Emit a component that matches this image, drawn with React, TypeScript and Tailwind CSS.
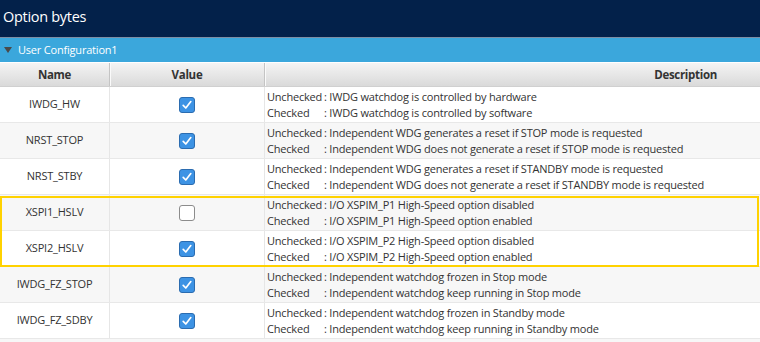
import React from "react";

type Row = {
  name: string;
  checked: boolean;
  off: string;
  on: string;
};

const rows: Row[] = [
  {
    name: "IWDG_HW",
    checked: true,
    off: "IWDG watchdog is controlled by hardware",
    on: "IWDG watchdog is controlled by software",
  },
  {
    name: "NRST_STOP",
    checked: true,
    off: "Independent WDG generates a reset if STOP mode is requested",
    on: "Independent WDG does not generate a reset if STOP mode is requested",
  },
  {
    name: "NRST_STBY",
    checked: true,
    off: "Independent WDG generates a reset if STANDBY mode is requested",
    on: "Independent WDG does not generate a reset if STANDBY mode is requested",
  },
  {
    name: "XSPI1_HSLV",
    checked: false,
    off: "I/O XSPIM_P1 High-Speed option disabled",
    on: "I/O XSPIM_P1 High-Speed option enabled",
  },
  {
    name: "XSPI2_HSLV",
    checked: true,
    off: "I/O XSPIM_P2 High-Speed option disabled",
    on: "I/O XSPIM_P2 High-Speed option enabled",
  },
  {
    name: "IWDG_FZ_STOP",
    checked: true,
    off: "Independent watchdog frozen in Stop mode",
    on: "Independent watchdog keep running in Stop mode",
  },
  {
    name: "IWDG_FZ_SDBY",
    checked: true,
    off: "Independent watchdog frozen in Standby mode",
    on: "Independent watchdog keep running in Standby mode",
  },
];

function Checkbox({ checked }: { checked: boolean }) {
  if (!checked) {
    return <div className="w-[16px] h-[16px] rounded-[3px] border border-[#8c8c8c] bg-white" />;
  }
  return (
    <div className="w-[16px] h-[16px] rounded-[3px] border border-[#2b6cb0] bg-[#3d93e4] flex items-center justify-center">
      <svg width="12" height="12" viewBox="0 0 12 12">
        <path d="M2.2 6.4 L4.8 9 L9.8 2.6" fill="none" stroke="#fff" strokeWidth="1.7" strokeLinecap="round" strokeLinejoin="round" />
      </svg>
    </div>
  );
}

function TableRow({ row, index }: { row: Row; index: number }) {
  const bg = index % 2 === 1 ? "bg-[#f7f7f7]" : "bg-white";
  return (
    <div className={`flex h-[36px] border-b border-[#e8e8e8] ${bg}`}>
      <div className="w-[110px] shrink-0 flex items-center justify-center border-r border-[#e6e6e6] text-[#333]">
        {row.name}
      </div>
      <div className="w-[155px] shrink-0 flex items-center justify-center border-r border-[#e6e6e6]">
        <Checkbox checked={row.checked} />
      </div>
      <div className="flex-1 flex flex-col justify-center pl-[2px] leading-[16px] text-[#333] whitespace-nowrap">
        <div className="flex">
          <span className="w-[57px]">Unchecked</span>
          <span>:&nbsp;{row.off}</span>
        </div>
        <div className="flex">
          <span className="w-[57px]">Checked</span>
          <span>:&nbsp;{row.on}</span>
        </div>
      </div>
    </div>
  );
}

export default function App() {
  return (
    <div
      className="w-[760px] h-[342px] overflow-hidden bg-white text-[11px] tracking-[-0.2px]"
      style={{ fontFamily: '"Open Sans", "Noto Sans", sans-serif' }}
    >
      {/* title */}
      <div className="h-[38px] bg-[#03214a] border-b border-[#7d8ea5] flex items-center pl-[3px] pb-[3px] text-white text-[14.5px] tracking-[-0.3px]">
        Option bytes
      </div>
      {/* group bar */}
      <div className="h-[25px] bg-[#3ba7dc] flex items-center text-white text-[11px] border-b border-white">
        <span className="ml-[4px] mr-[6px] w-0 h-0 border-l-[4px] border-r-[4px] border-t-[6px] border-l-transparent border-r-transparent border-t-[#4a4a4a]" />
        User Configuration1
      </div>
      {/* header */}
      <div className="h-[24px] flex bg-gradient-to-b from-[#f4f4f4] to-[#dadada] border-b border-[#d0d0d0] font-bold text-[#333] text-[11.5px] tracking-[-0.3px]">
        <div className="w-[110px] shrink-0 flex items-center justify-center border-r border-[#c4c4c4] shadow-[1px_0_0_#fafafa]">Name</div>
        <div className="w-[155px] shrink-0 flex items-center justify-center border-r border-[#c4c4c4] shadow-[1px_0_0_#fafafa]">Value</div>
        <div className="flex-1 flex items-center justify-end pr-[43px]">Description</div>
      </div>
      {rows.slice(0, 3).map((r, i) => (
        <TableRow key={r.name} row={r} index={i} />
      ))}
      <div className="relative">
        {rows.slice(3, 5).map((r, i) => (
          <TableRow key={r.name} row={r} index={i + 3} />
        ))}
        <div className="absolute left-0 right-[1px] top-[1px] bottom-0 border-2 border-[#ffd200] pointer-events-none" />
      </div>
      {rows.slice(5).map((r, i) => (
        <TableRow key={r.name} row={r} index={i + 5} />
      ))}
      <div className="h-[36px] bg-[#f7f7f7]" />
    </div>
  );
}
